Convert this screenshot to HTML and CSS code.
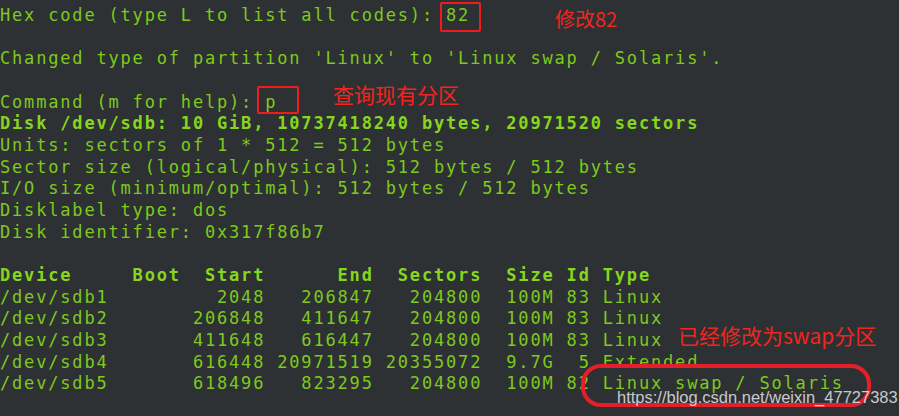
FILE: index.html
```html
<!DOCTYPE html>
<html lang="zh-CN">
<head>
<meta charset="utf-8">
<title>fdisk</title>
<link rel="stylesheet" href="styles.css">
</head>
<body>
<div class="screen">
<pre class="term">Hex code (type L to list all codes): 82

Changed type of partition 'Linux' to 'Linux swap / Solaris'.

Command (m for help): p
<b>Disk /dev/sdb: 10 GiB, 10737418240 bytes, 20971520 sectors</b>
Units: sectors of 1 * 512 = 512 bytes
Sector size (logical/physical): 512 bytes / 512 bytes
I/O size (minimum/optimal): 512 bytes / 512 bytes
Disklabel type: dos
Disk identifier: 0x317f86b7

<b>Device     Boot  Start      End  Sectors  Size Id Type</b>
/dev/sdb1         2048   206847   204800  100M 83 Linux
/dev/sdb2       206848   411647   204800  100M 83 Linux
/dev/sdb3       411648   616447   204800  100M 83 Linux
/dev/sdb4       616448 20971519 20355072  9.7G  5 Extended
/dev/sdb5       618496   823295   204800  100M 82 Linux swap / Solaris</pre>
<div class="box box-82"></div>
<div class="note note-82">修改82</div>
<div class="box box-p"></div>
<div class="note note-p">查询现有分区</div>
<div class="note note-swap">已经修改为swap分区</div>
<div class="ring"></div>
<div class="watermark">https://blog.csdn.net/weixin_47727383</div>
</div>
</body>
</html>
```
FILE: styles.css
```css
html, body {
  margin: 0;
  padding: 0;
  background: #2d3134;
}
.screen {
  position: relative;
  width: 899px;
  height: 416px;
  overflow: hidden;
  background: #2d3134;
}
.term {
  margin: 0;
  padding: 5px 0 0 0;
  font-family: "DejaVu Sans Mono", monospace;
  font-size: 17px;
  letter-spacing: 1.82px;
  line-height: 21.65px;
  color: #7ec91c;
  white-space: pre;
}
.term b {
  font-weight: bold;
  color: #86d61e;
}
.box {
  position: absolute;
  border: 2px solid #f01c1c;
  border-radius: 2px;
  box-sizing: border-box;
}
.box-82 {
  left: 440px;
  top: 2px;
  width: 41px;
  height: 30px;
}
.box-p {
  left: 257px;
  top: 86px;
  width: 42px;
  height: 28px;
}
.note {
  position: absolute;
  font-family: "Noto Sans CJK SC", sans-serif;
  color: #f2251c;
  white-space: nowrap;
  line-height: 1;
}
.note-82 {
  left: 555px;
  top: 9px;
  font-size: 20px;
}
.note-p {
  left: 333px;
  top: 84px;
  font-size: 21px;
}
.note-swap {
  left: 678px;
  top: 325px;
  font-size: 21px;
}
.ring {
  position: absolute;
  left: 581px;
  top: 364px;
  width: 290px;
  height: 43px;
  box-sizing: border-box;
  border: 4px solid #e51f2a;
  border-radius: 20px;
}
.watermark {
  position: absolute;
  left: 617px;
  top: 386px;
  font-family: "Liberation Sans", Arial, sans-serif;
  font-size: 16.5px;
  line-height: 22px;
  color: rgba(230, 230, 230, 0.85);
  white-space: nowrap;
}
```
